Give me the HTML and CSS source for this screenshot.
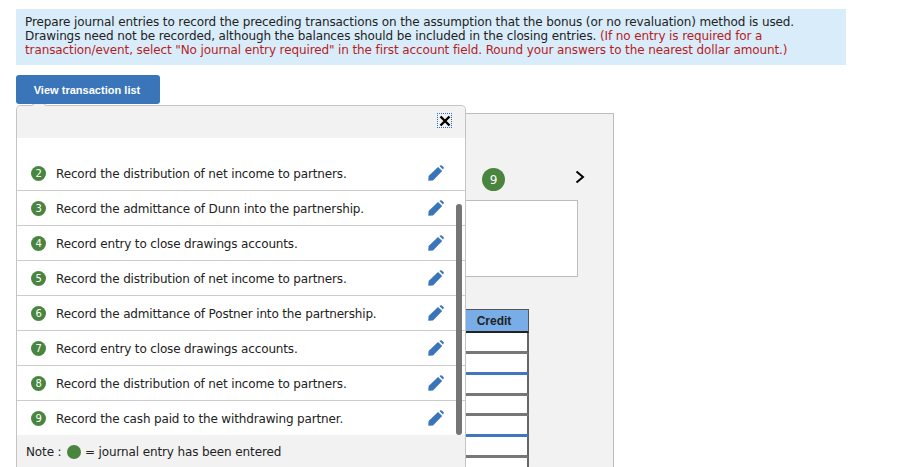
FILE: index.html
```html
<!DOCTYPE html>
<html lang="en">
<head>
<meta charset="utf-8">
<title>Journal entries</title>
<link rel="stylesheet" href="styles.css">
</head>
<body>
<svg class="defs" width="0" height="0" aria-hidden="true">
  <symbol id="pencil" viewBox="0 0 16 16">
    <path d="M0.3 15.7 L0.6 11 L10 1.9 L14.2 6 L5 15.4 Z" fill="#3a75ba"/>
    <path d="M11.4 1 L12.8 0.2 Q13.3 0 13.8 0.4 L15.7 2.3 Q16 2.8 15.7 3.3 L15 4.6 Z" fill="#3a75ba"/>
  </symbol>
</svg>
<div class="instructions">Prepare journal entries to record the preceding transactions on the assumption that the bonus (or no revaluation) method is used. Drawings need not be recorded, although the balances should be included in the closing entries. <span class="red">(If no entry is required for a transaction/event, select "No journal entry required" in the first account field. Round your answers to the nearest dollar amount.)</span></div>
<div class="toolbar"><button class="view-btn">View transaction list</button></div>
<div class="stage">
  <section class="panel">
    <div class="panel-top">
      <span class="badge badge-lg">9</span>
      <svg class="chev" width="10" height="14" viewBox="0 0 10 14"><path d="M1.5 1.5 L8 7 L1.5 12.5" fill="none" stroke="#000" stroke-width="2"/></svg>
    </div>
    <div class="panel-box"></div>
    <div class="credit-col">
      <div class="credit-head">Credit</div>
      <div class="cell"></div>
      <div class="cell blue"></div>
      <div class="cell"></div>
      <div class="cell short"></div>
      <div class="cell blue"></div>
      <div class="cell"></div>
      <div class="cell"></div>
    </div>
  </section>
  <aside class="popup">
    <span class="pointer"></span>
    <div class="popup-head"><span class="close"><svg width="12" height="12" viewBox="0 0 12 12"><path d="M1.5 1.5 L10.5 10.5 M10.5 1.5 L1.5 10.5" stroke="#000" stroke-width="2.4"/></svg></span></div>
    <div class="list">
      <div class="row"><span class="badge">2</span><span class="label">Record the distribution of net income to partners.</span><svg class="pen" width="16" height="16"><use href="#pencil"/></svg></div>
      <div class="row"><span class="badge">3</span><span class="label">Record the admittance of Dunn into the partnership.</span><svg class="pen" width="16" height="16"><use href="#pencil"/></svg></div>
      <div class="row"><span class="badge">4</span><span class="label">Record entry to close drawings accounts.</span><svg class="pen" width="16" height="16"><use href="#pencil"/></svg></div>
      <div class="row"><span class="badge">5</span><span class="label">Record the distribution of net income to partners.</span><svg class="pen" width="16" height="16"><use href="#pencil"/></svg></div>
      <div class="row"><span class="badge">6</span><span class="label">Record the admittance of Postner into the partnership.</span><svg class="pen" width="16" height="16"><use href="#pencil"/></svg></div>
      <div class="row"><span class="badge">7</span><span class="label">Record entry to close drawings accounts.</span><svg class="pen" width="16" height="16"><use href="#pencil"/></svg></div>
      <div class="row"><span class="badge">8</span><span class="label">Record the distribution of net income to partners.</span><svg class="pen" width="16" height="16"><use href="#pencil"/></svg></div>
      <div class="row"><span class="badge">9</span><span class="label">Record the cash paid to the withdrawing partner.</span><svg class="pen" width="16" height="16"><use href="#pencil"/></svg></div>
      <span class="scrollbar"></span>
    </div>
    <div class="note">Note : <span class="dot"></span> = journal entry has been entered</div>
  </aside>
</div>
</body>
</html>
```
FILE: styles.css
```css
html, body { margin: 0; padding: 0; height: 467px; overflow: hidden; background: #fff; }
body { font-family: "DejaVu Sans", sans-serif; font-size: 12px; color: #222; }
.defs { position: absolute; }
.instructions { width: 812px; height: 42px; margin: 9px 0 0 16px; padding: 6px 9px 8px; background: #d9ecfa; line-height: 14px; color: #222; letter-spacing: -0.11px; }
.red { color: #b81c23; }
.toolbar { margin: 10px 0 0 16px; height: 29px; }
.view-btn { display: block; width: 144px; height: 29px; border: 0; border-radius: 3px; background: #3a75ba; color: #fff; font: bold 11px/31px "Liberation Sans", sans-serif; padding: 0 2px 0 0; letter-spacing: 0.02px; }
.stage { position: relative; height: 363px; overflow: hidden; }
.panel { position: absolute; left: 100px; top: 9px; width: 514px; height: 354px; box-sizing: border-box; background: #f2f2f2; border: 1px solid #bcbcbc; border-bottom: 0; overflow: hidden; }
.panel-top { height: 86px; display: flex; align-items: flex-start; padding: 54px 0 0 381px; box-sizing: border-box; }
.badge { flex: none; display: flex; width: 15px; height: 15px; border-radius: 50%; background: #4a8540; color: #fff; font-size: 10px; align-items: center; justify-content: center; }
.badge-lg { width: 23px; height: 23px; font-size: 12px; }
.chev { margin: 2px 0 0 70px; }
.panel-box { box-sizing: border-box; width: 150px; height: 77px; margin-left: 327px; background: #fff; border: 1px solid #bcbcbc; }
.credit-col { width: 68px; margin: 32px 0 0 360px; }
.credit-head { height: 24px; box-sizing: border-box; background: #78ade8; border: 1px solid #555; border-bottom: 2px solid #222; font: bold 12px/22px "Liberation Sans", sans-serif; text-align: center; color: #222; padding-right: 2px; }
.cell { height: 18px; background: #fff; border-right: 2px solid #666; border-bottom: 3px solid #777; }
.cell.blue { border-bottom-color: #3f78bd; }
.cell.short { height: 17px; }
.popup { position: absolute; left: 16px; top: 1px; width: 450px; height: 362px; box-sizing: border-box; background: #fff; border: 1px solid #c4c4c4; border-bottom: 0; border-radius: 5px 5px 0 0; z-index: 2; }
.pointer { position: absolute; left: 17px; top: -6px; width: 10px; height: 10px; background: #f2f2f2; transform: rotate(45deg); border-left: 1px solid #c4c4c4; border-top: 1px solid #c4c4c4; box-sizing: border-box; }
.popup-head { position: relative; height: 32px; background: #f2f2f2; border-radius: 5px 5px 0 0; display: flex; justify-content: flex-end; align-items: flex-start; padding: 7px 13px 0 0; box-sizing: border-box; }
.close { display: flex; align-items: center; justify-content: center; width: 15px; height: 15px; box-sizing: border-box; border: 1px dotted #2a6ec0; }
.list { position: relative; padding-top: 18px; letter-spacing: -0.15px; }
.row { height: 35px; box-sizing: border-box; display: flex; align-items: center; padding: 0 21px 0 14px; border-bottom: 1px solid #ccc; }
.row:last-of-type { height: 34px; border-bottom: 0; }
.label { flex: 1; margin-left: 10px; padding-top: 2px; }
.pen { margin-top: -1px; }
.scrollbar { position: absolute; right: 3px; top: 66px; width: 6px; height: 231px; background: #757575; border-radius: 3px; }
.note { height: 32px; background: #f2f2f2; padding: 10px 0 0 9px; box-sizing: border-box; line-height: 14px; letter-spacing: -0.12px; }
.dot { display: inline-block; width: 14px; height: 14px; margin: 0 0 0 2px; border-radius: 50%; background: #4a8540; vertical-align: -3px; }
```
